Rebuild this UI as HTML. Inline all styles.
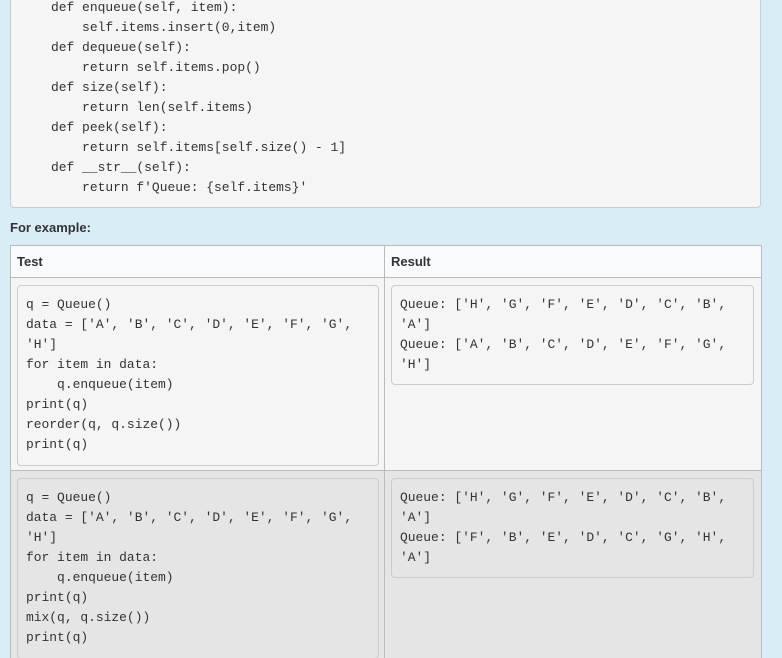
<!DOCTYPE html>
<html><head><style>
html,body{margin:0;height:658px;overflow:hidden;}
body{background:#d9edf6;width:782px;position:relative;font-family:"Liberation Sans",sans-serif;}
pre{margin:0;font-family:"Liberation Mono",monospace;font-size:12.95px;line-height:20px;color:#333;}
.top{position:absolute;left:10px;top:-20px;width:749px;height:226px;background:#f5f5f5;border:1px solid #ccc;border-radius:4px;}
.top pre{position:absolute;left:40px;top:17px;}
.fe{position:absolute;left:10px;top:220px;font-weight:bold;font-size:13px;color:#333;}
.tbl{position:absolute;left:10px;top:245px;width:750px;height:420px;border:1px solid #bbb;}
.hd{position:absolute;top:0;height:32px;background:#f9fafb;border-bottom:1px solid #bbb;font-weight:bold;font-size:13px;color:#333;line-height:32px;padding-left:6px;box-sizing:border-box;}
.vl{position:absolute;left:373px;top:0;bottom:0;width:1px;background:#bbb;}
.r1{position:absolute;left:0;right:0;top:32px;height:192px;background:#f5f5f5;border-bottom:1px solid #bbb;}
.r2{position:absolute;left:0;right:0;top:225px;height:200px;background:#e5e5e5;}
.box{position:absolute;border:1px solid #ccc;border-radius:4px;box-sizing:border-box;}
.box pre{position:absolute;left:8px;top:9px;}
</style></head><body>
<div class="top"><pre>def enqueue(self, item):
    self.items.insert(0,item)
def dequeue(self):
    return self.items.pop()
def size(self):
    return len(self.items)
def peek(self):
    return self.items[self.size() - 1]
def __str__(self):
    return f'Queue: {self.items}'</pre></div>
<div class="fe">For example:</div>
<div class="tbl">
<div class="hd" style="left:0;width:373px">Test</div>
<div class="hd" style="left:374px;right:0">Result</div>
<div class="r1">
 <div class="box" style="left:6px;top:7px;width:362px;height:181px;background:#f5f5f5"><pre>q = Queue()
data = ['A', 'B', 'C', 'D', 'E', 'F', 'G',
'H']
for item in data:
    q.enqueue(item)
print(q)
reorder(q, q.size())
print(q)</pre></div>
 <div class="box" style="left:380px;top:7px;width:363px;height:100px;background:#f5f5f5"><pre>Queue: ['H', 'G', 'F', 'E', 'D', 'C', 'B',
'A']
Queue: ['A', 'B', 'C', 'D', 'E', 'F', 'G',
'H']</pre></div>
</div>
<div class="r2">
 <div class="box" style="left:6px;top:7px;width:362px;height:181px;background:#e5e5e5"><pre>q = Queue()
data = ['A', 'B', 'C', 'D', 'E', 'F', 'G',
'H']
for item in data:
    q.enqueue(item)
print(q)
mix(q, q.size())
print(q)</pre></div>
 <div class="box" style="left:380px;top:7px;width:363px;height:100px;background:#e5e5e5"><pre>Queue: ['H', 'G', 'F', 'E', 'D', 'C', 'B',
'A']
Queue: ['F', 'B', 'E', 'D', 'C', 'G', 'H',
'A']</pre></div>
</div>
<div class="vl"></div>
</div>
</body></html>
